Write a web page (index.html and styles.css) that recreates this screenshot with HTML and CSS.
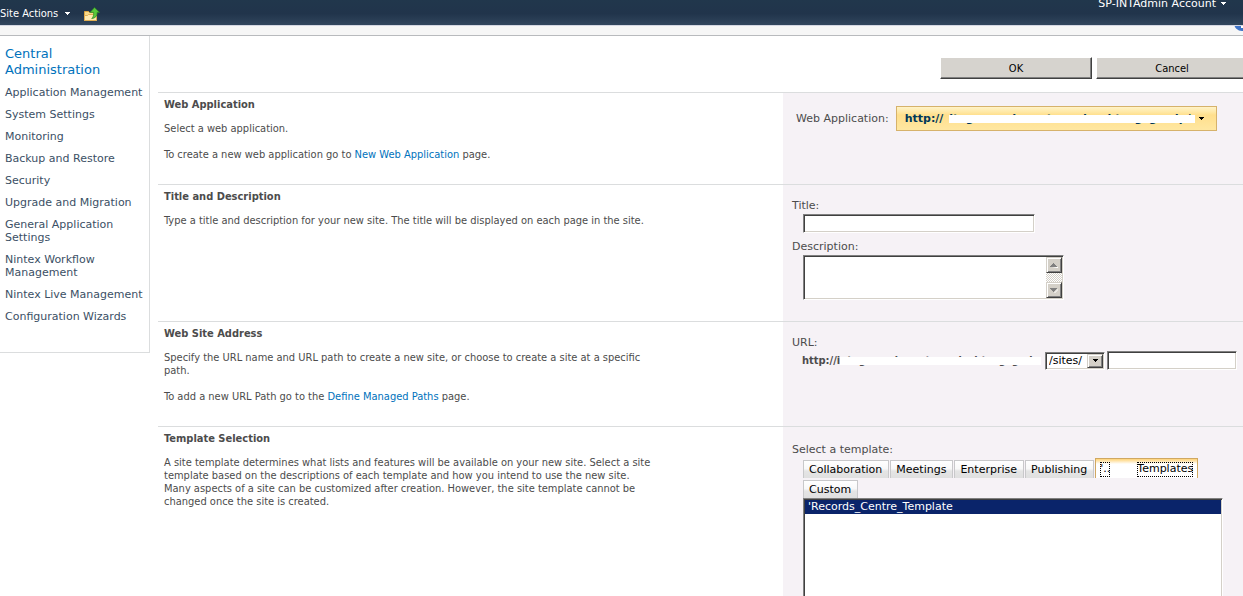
FILE: index.html
```html
<!DOCTYPE html>
<html lang="en">
<head>
    <meta charset="UTF-8">
    <meta name="viewport" content="width=device-width, initial-scale=1.0">
    <title>Create Site Collection</title>
    <link rel="stylesheet" href="styles.css">
</head>
<body>
    <header class="topbar">
        <button type="button" class="menu-btn site-actions">Site Actions
            <svg class="caret" width="5" height="3" viewBox="0 0 5 3"><path d="M0 0h5v1H4v1H3v1H2V2H1V1H0z" fill="currentColor"/></svg>
        </button>
        <button type="button" class="icon-btn" aria-label="Navigate up">
            <svg width="16" height="15" viewBox="0 0 16 15">
                <path d="M.5 4.500h4l1 1h7v8H.5z" fill="#f8d98a" stroke="#dba440"/>
                <path d="M.5 13.500v-5h3l1-1h8v6z" fill="#ffeab0" stroke="#e0ad50"/>
                <path d="M10.500.6 15.600 5.400h-2.400c.1 3.600-1.900 5.900-5.500 6.100 1.600-1.500 2.200-3.200 1.900-6.100H6z" fill="#59c83b" stroke="#2c8424" stroke-width=".7"/>
            </svg>
        </button>
        <button type="button" class="menu-btn account">SP-INTAdmin Account
            <svg class="caret" width="5" height="3" viewBox="0 0 5 3"><path d="M0 0h5v1H4v1H3v1H2V2H1V1H0z" fill="currentColor"/></svg>
        </button>
    </header>
    <div class="ribbon">
        <svg class="help" width="16" height="16" viewBox="0 0 16 16">
            <circle cx="8" cy="8" r="8" fill="#3f74c8"/>
            <path d="M7 12h2" stroke="#fff" stroke-width="2"/>
        </svg>
    </div>

    <div class="layout">
        <nav class="sidebar">
            <h2><a href="#">Central Administration</a></h2>
            <ul>
                <li><a href="#">Application Management</a></li>
                <li><a href="#">System Settings</a></li>
                <li><a href="#">Monitoring</a></li>
                <li><a href="#">Backup and Restore</a></li>
                <li><a href="#">Security</a></li>
                <li><a href="#">Upgrade and Migration</a></li>
                <li><a href="#">General Application Settings</a></li>
                <li><a href="#">Nintex Workflow Management</a></li>
                <li><a href="#">Nintex Live Management</a></li>
                <li><a href="#">Configuration Wizards</a></li>
            </ul>
        </nav>

        <form class="content">
            <div class="actions">
                <button type="button" class="btn">OK</button>
                <button type="button" class="btn">Cancel</button>
            </div>

            <section class="row row-app">
                <div class="info">
                    <h3>Web Application</h3>
                    <p>Select a web application.</p>
                    <p>To create a new web application go to <a href="#">New Web Application</a> page.</p>
                </div>
                <div class="fields app-field">
                    <span id="app-label">Web Application:</span>
                    <button type="button" class="app-picker" aria-labelledby="app-label">
                        <span class="scheme">http://</span><span class="masked">itagasessdowertsessdesshtesgsgsedp/</span>
                        <svg class="caret" width="5" height="3" viewBox="0 0 5 3"><path d="M0 0h5v1H4v1H3v1H2V2H1V1H0z" fill="currentColor"/></svg>
                    </button>
                </div>
            </section>

            <section class="row row-title">
                <div class="info">
                    <h3>Title and Description</h3>
                    <p>Type a title and description for your new site. The title will be displayed on each page in the site.</p>
                </div>
                <div class="fields">
                    <label for="title">Title:</label>
                    <input type="text" id="title" class="box title-box">
                    <label for="description">Description:</label>
                    <div class="box area-box">
                        <textarea id="description"></textarea>
                        <div class="scroll">
                            <button type="button" class="scroll-btn" aria-label="Scroll up">
                                <svg width="8" height="5" viewBox="0 0 8 5"><path d="M2 5h6V4H7z" fill="#fff"/><path d="M3 0h1v1h1v1h1v1h1v1H0V3h1V2h1V1h1z" fill="#808080"/></svg>
                            </button>
                            <button type="button" class="scroll-btn" aria-label="Scroll down">
                                <svg width="8" height="5" viewBox="0 0 8 5"><path d="M8 1v1L5 5H4z" fill="#fff"/><path d="M0 0h7v1H6v1H5v1H4v1H3V3H2V2H1V1H0z" fill="#808080"/></svg>
                            </button>
                        </div>
                    </div>
                </div>
            </section>

            <section class="row row-url">
                <div class="info">
                    <h3>Web Site Address</h3>
                    <p>Specify the URL name and URL path to create a new site, or choose to create a site at a specific path.</p>
                    <p>To add a new URL Path go to the <a href="#">Define Managed Paths</a> page.</p>
                </div>
                <div class="fields">
                    <label for="url">URL:</label>
                    <div class="url-line">
                        <span class="host">http://i<span class="masked">ntagasesdowertsessdeshtesgsged</span></span>
                        <span class="box path-box">
                            <select aria-label="Managed path"><option>/sites/</option></select>
                            <span class="drop">
                                <svg width="5" height="3" viewBox="0 0 5 3"><path d="M0 0h5v1H4v1H3v1H2V2H1V1H0z"/></svg>
                            </span>
                        </span>
                        <input type="text" id="url" class="box url-box">
                    </div>
                </div>
            </section>

            <section class="row row-template">
                <div class="info">
                    <h3>Template Selection</h3>
                    <p>A site template determines what lists and features will be available on your new site. Select a site template based on the descriptions of each template and how you intend to use the new site. Many aspects of a site can be customized after creation. However, the site template cannot be changed once the site is created.</p>
                </div>
                <div class="fields">
                    <label for="template">Select a template:</label>
                    <div class="tabs">
                        <button type="button" class="tab">Collaboration</button>
                        <button type="button" class="tab">Meetings</button>
                        <button type="button" class="tab">Enterprise</button>
                        <button type="button" class="tab">Publishing</button>
                        <button type="button" class="tab active"><span>'..</span><span>Templates</span></button>
                        <button type="button" class="tab">Custom</button>
                    </div>
                    <select id="template" class="box template-list" size="8">
                        <option selected>'Records_Centre_Template</option>
                    </select>
                </div>
            </section>
        </form>
    </div>
</body>
</html>
```
FILE: styles.css
```css
* {
    box-sizing: border-box;
}
body {
    margin: 0;
    height: 100vh;
    overflow: hidden;
    display: flex;
    flex-direction: column;
    font-family: Verdana, 'DejaVu Sans', sans-serif;
    font-size: 11px;
    line-height: 13px;
    color: #4c4c4c;
    background: #fff;
}
button, input, select, textarea {
    font: inherit;
    margin: 0;
}
a {
    color: #0072bc;
    text-decoration: none;
}

/* top bar */
.topbar {
    display: flex;
    align-items: center;
    flex: none;
    height: 25px;
    background: linear-gradient(#21374c 0, #21344b 55%, #31465d 100%);
}
.menu-btn {
    display: flex;
    align-items: center;
    gap: 5px;
    padding: 0;
    border: 0;
    background: none;
    color: #fff;
}
.site-actions {
    gap: 7px;
    padding-top: 2px;
    font-family: Tahoma, 'DejaVu Sans Condensed', sans-serif;
}
.icon-btn {
    display: flex;
    margin: 3px 0 0 14px;
    padding: 0;
    border: 0;
    background: none;
}
.account {
    align-self: flex-start;
    margin: -3px 17px 0 auto;
}
.ribbon {
    position: relative;
    flex: none;
    height: 11px;
    overflow: hidden;
    background: #f6f6f6;
    border-top: 1px solid #d4d7e2;
    border-bottom: 1px solid #b8babd;
}
.help {
    position: absolute;
    right: -7px;
    bottom: 4px;
}

.layout {
    display: flex;
    flex: 1;
    min-height: 0;
}

/* left navigation */
.sidebar {
    flex: none;
    align-self: flex-start;
    width: 150px;
    padding: 10px 0 20px 5px;
    border-right: 1px solid #dbddde;
    border-bottom: 1px solid #dbddde;
}
.sidebar h2 {
    margin: 0 0 8px;
    font-size: 13px;
    font-weight: normal;
    line-height: 16px;
}
.sidebar ul {
    margin: 0;
    padding: 0;
    list-style: none;
}
.sidebar li {
    margin-bottom: 9px;
}
.sidebar li a {
    display: block;
    color: #3b4f65;
}

/* form */
.content {
    display: flex;
    flex-direction: column;
    flex: 1;
    min-width: 0;
    padding-left: 8px;
}
.actions {
    display: flex;
    flex: none;
    justify-content: flex-end;
    gap: 4px;
    height: 56px;
    margin-right: -5px;
    padding-top: 21px;
}
.btn {
    width: 152px;
    height: 22px;
    padding: 0;
    font-family: Tahoma, 'DejaVu Sans Condensed', sans-serif;
    color: #000;
    background: #d6d3ce;
    border: 1px solid;
    border-color: #fff #404040 #404040 #fff;
    box-shadow: inset -1px -1px #808080;
}
.row {
    display: grid;
    grid-template-columns: minmax(0, 1fr) 460px;
    flex: none;
    border-top: 1px solid #dbddde;
}
.row-app { min-height: 92px; }
.row-title { min-height: 137px; }
.row-url { min-height: 105px; }
.row-template {
    flex: 1;
    min-height: 0;
}

.info {
    max-width: 506px;
    padding: 5px 10px 0 6px;
    font-family: Tahoma, 'DejaVu Sans Condensed', sans-serif;
}
.info h3 {
    margin: 0 0 11px;
    font-size: 11px;
    line-height: 13px;
}
.info p {
    margin: 0 0 13px;
}
.fields {
    display: flex;
    flex-direction: column;
    align-items: flex-start;
    min-height: 0;
    padding: 14px 0 0 9px;
    background: #f6f2f6;
}
.row-template .fields {
    padding-top: 16px;
}
.app-field {
    flex-direction: row;
    align-items: center;
    gap: 7px;
    padding: 13px 26px 53px 13px;
}
.app-picker {
    display: flex;
    flex: 1;
    align-items: center;
    height: 25px;
    padding: 0 12px 0 8px;
    font-weight: bold;
    color: #003759;
    white-space: nowrap;
    background: linear-gradient(#fff3c8 0, #ffe9a8 20%, #ffdf8c 35%, #ffe7a2 100%);
    border: 1px solid #d6b26b;
}
.app-picker .caret {
    margin-left: 4px;
    color: #000;
}
.scheme {
    margin-right: 6px;
}
/* host name hidden behind a white strip */
.masked {
    position: relative;
    flex: 1;
    width: 0;
    text-align: left;
}
.masked::after {
    content: '';
    position: absolute;
    inset: 3px 0 2px;
    background: #fff;
}

.box {
    background: #fff;
    border: 1px solid;
    border-color: #808080 #fff #fff #808080;
    border-radius: 0;
    box-shadow: inset 1px 1px #404040, inset -1px -1px #d4d0c8;
    outline: none;
}
.title-box {
    width: 232px;
    height: 19px;
    margin: 2px 0 7px 11px;
}
.area-box {
    display: flex;
    width: 261px;
    height: 45px;
    margin: 2px 0 0 11px;
    padding: 1px;
}
.area-box textarea {
    flex: 1;
    min-width: 0;
    border: 0;
    resize: none;
    outline: none;
    background: transparent;
    overflow: hidden;
}
.scroll {
    display: flex;
    flex-direction: column;
    justify-content: space-between;
    width: 16px;
    background: repeating-conic-gradient(#d4d0c8 0 25%, #fff 0 50%) 0 0 / 2px 2px;
}
.scroll-btn, .drop {
    display: flex;
    align-items: center;
    justify-content: center;
    width: 16px;
    height: 16px;
    padding: 0;
    background: #d4d0c8;
    border: 1px solid;
    border-color: #d4d0c8 #404040 #404040 #d4d0c8;
    box-shadow: inset 1px 1px #fff, inset -1px -1px #808080;
}
.url-line {
    display: flex;
    align-items: center;
    align-self: stretch;
    gap: 2px;
    margin: 2px 6px 0 10px;
}
.host {
    display: flex;
    flex: 1;
    min-width: 0;
    margin-right: 2px;
    font-family: Tahoma, 'DejaVu Sans Condensed', sans-serif;
    font-weight: bold;
    white-space: nowrap;
}
.path-box {
    position: relative;
    width: 60px;
    height: 18px;
    padding: 1px;
}
.path-box select {
    width: 100%;
    height: 14px;
    padding: 0 0 0 2px;
    appearance: none;
    border: 0;
    color: #000;
    background: transparent;
}
.drop {
    position: absolute;
    top: 1px;
    right: 1px;
    height: 14px;
    pointer-events: none;
}
.url-box {
    width: 130px;
    height: 19px;
}

/* template picker */
.tabs {
    display: flex;
    flex-wrap: wrap;
    align-items: flex-end;
    gap: 2px 1px;
    width: 420px;
    margin: 2px 0 0 11px;
}
.tab {
    height: 18px;
    padding: 0 6px 0 5px;
    color: #000;
    white-space: nowrap;
    background: linear-gradient(#fff 0, #f8f8f8 45%, #e4e4e4 60%, #e0e0e0 100%);
    border: 1px solid #c8c8ca;
    border-bottom: 0;
}
.tab.active {
    display: flex;
    justify-content: space-between;
    width: 103px;
    height: 20px;
    padding: 3px 4px 1px;
    background: linear-gradient(#ffd377 0, #fff 5px);
    border-color: #d0a861;
}
.tab.active span {
    outline: 1px dotted #000;
    outline-offset: -1px;
}
.template-list {
    flex: 1;
    width: 420px;
    min-height: 0;
    margin-left: 11px;
    padding: 1px;
    border-bottom: 0;
    box-shadow: inset 1px 1px #404040, inset -1px 0 #d4d0c8;
    overflow: hidden;
}
.template-list option {
    min-height: 14px;
    padding: 0 3px;
}
.template-list option:checked {
    color: #fff;
    background: #0a246a linear-gradient(#0a246a, #0a246a);
}
```
